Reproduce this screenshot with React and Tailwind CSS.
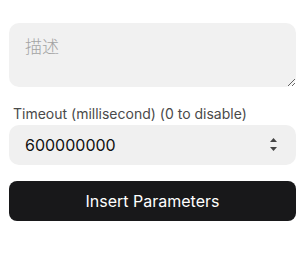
export default function App() {
  return (
    <div className="w-[307px] h-[258px] bg-white pl-[9px] pr-[11px] pt-[23px]" style={{ fontFamily: 'Inter, "Noto Sans CJK SC", sans-serif' }}>
      <textarea
        placeholder="描述"
        className="block w-full h-[64px] rounded-[10px] bg-[#f1f1f1] px-4 py-[10px] text-[17px] leading-[26px] text-[#111] placeholder:text-[#a3a3a3] outline-none"
        style={{ fontFamily: '"Noto Sans CJK SC", sans-serif', fontWeight: 300 }}
      />
      <div className="mt-[18px] pl-[4px] text-[14px] leading-[18px] text-[#4a4a4a]">Timeout (millisecond) (0 to disable)</div>
      <div className="relative mt-[2px]">
        <input
          type="number"
          defaultValue={600000000}
          className="block w-full h-[40px] rounded-[10px] bg-[#f0f0f0] pl-4 pr-[30px] text-[16px] text-[#111] outline-none [appearance:textfield] [&::-webkit-inner-spin-button]:appearance-none [&::-webkit-outer-spin-button]:appearance-none"
        />
        <div className="absolute right-[19px] top-[13px] flex flex-col items-center gap-[5px] pointer-events-none">
          <svg width="7" height="4" viewBox="0 0 7 4"><path d="M3.5 0L7 4H0z" fill="#444" /></svg>
          <svg width="7" height="4" viewBox="0 0 7 4"><path d="M0 0H7L3.5 4z" fill="#444" /></svg>
        </div>
      </div>
      <button className="mt-[16px] w-full h-[40px] rounded-[8px] bg-[#18181a] text-white text-[16px] font-normal">
        Insert Parameters
      </button>
    </div>
  );
}
